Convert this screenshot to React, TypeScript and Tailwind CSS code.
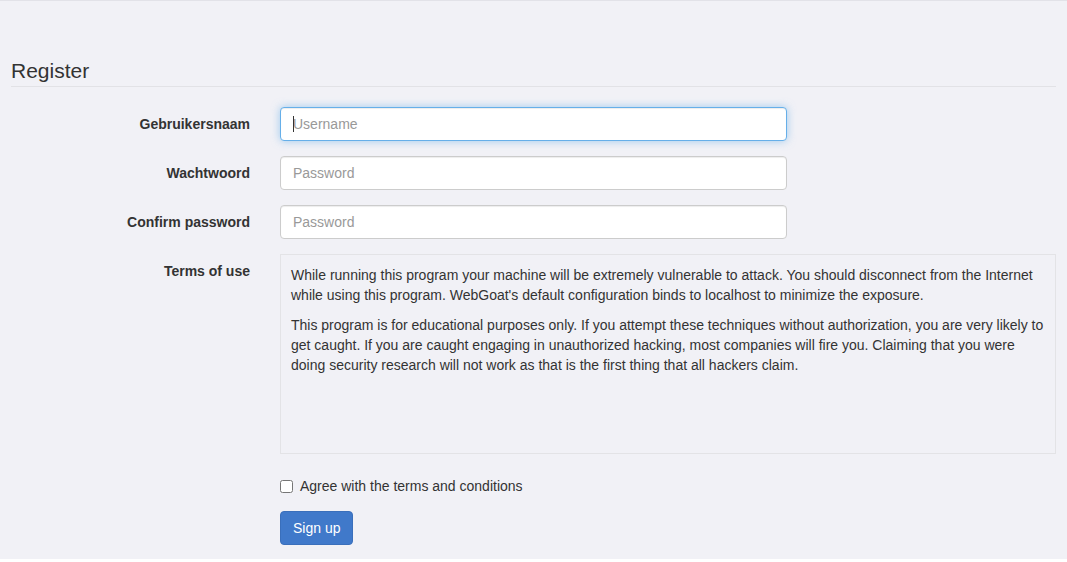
import { useState } from "react";

const font = { fontFamily: '"Liberation Sans", Arial, Helvetica, sans-serif' };

function FieldRow({ label, children }: { label: string; children: React.ReactNode }) {
  return (
    <div className="flex gap-[30px] mb-[15px]">
      <label className="w-[239px] shrink-0 text-right font-bold text-[14px] leading-[20px] pt-[7px] text-[#333]">
        {label}
      </label>
      {children}
    </div>
  );
}

export default function App() {
  const [agree, setAgree] = useState(false);

  const inputBase =
    "w-[507px] h-[34px] px-[12px] py-[6px] text-[14px] leading-[20px] text-[#555] bg-white border rounded-[4px] outline-none placeholder:text-[#999]";

  return (
    <div
      style={font}
      className="bg-[#f1f1f6] border-t border-[#e2e2e8] px-[11px] pt-[55px] pb-[14px] text-[#333] text-[14px]"
    >
      <fieldset>
        <legend className="w-full text-[21px] leading-[30px] border-b border-[#e2e2e6] mb-[20px] text-[#333]">
          Register
        </legend>

        <FieldRow label="Gebruikersnaam">
          <div className="relative">
            <input
              type="text"
              placeholder="Username"
              className={`${inputBase} border-[#66afe9] shadow-[inset_0_1px_1px_rgba(0,0,0,0.075),0_0_8px_rgba(102,175,233,0.6)]`}
            />
            <span className="absolute left-[13px] top-[9px] w-px h-[16px] bg-[#333]" />
          </div>
        </FieldRow>

        <FieldRow label="Wachtwoord">
          <input
            type="password"
            placeholder="Password"
            className={`${inputBase} border-[#ccc] shadow-[inset_0_1px_1px_rgba(0,0,0,0.075)]`}
          />
        </FieldRow>

        <FieldRow label="Confirm password">
          <input
            type="password"
            placeholder="Password"
            className={`${inputBase} border-[#ccc] shadow-[inset_0_1px_1px_rgba(0,0,0,0.075)]`}
          />
        </FieldRow>

        <FieldRow label="Terms of use">
          <div className="w-[776px] h-[200px] border border-[#e3e3e6] p-[10px] leading-[20px] text-[14px] text-[#333]">
            <p className="mb-[10px]">
              While running this program your machine will be extremely vulnerable to attack. You should disconnect
              from the Internet while using this program. WebGoat's default configuration binds to localhost to
              minimize the exposure.
            </p>
            <p className="mb-[10px]">
              This program is for educational purposes only. If you attempt these techniques without authorization,
              you are very likely to get caught. If you are caught engaging in unauthorized hacking, most companies
              will fire you. Claiming that you were doing security research will not work as that is the first thing
              that all hackers claim.
            </p>
          </div>
        </FieldRow>

        <div className="pl-[269px]">
          <label className="flex items-center pt-[7px] mb-[15px] leading-[20px] text-[14px] text-[#333]">
            <input
              type="checkbox"
              checked={agree}
              onChange={(e) => setAgree(e.target.checked)}
              className="w-[13px] h-[13px] m-0 mr-[7px] accent-[#4079ca]"
            />
            Agree with the terms and conditions
          </label>
          <button
            type="button"
            className="h-[34px] px-[12px] text-[14px] leading-[20px] text-white bg-[#4079ca] border border-[#3a6fbb] rounded-[4px]"
          >
            Sign up
          </button>
        </div>
      </fieldset>
    </div>
  );
}
